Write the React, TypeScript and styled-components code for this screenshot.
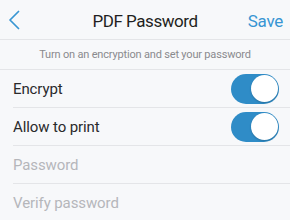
import React from "react";
import styled, { createGlobalStyle } from "styled-components";

const Global = createGlobalStyle`
  html, body { margin: 0; padding: 0; background: #f7f8fa; }
  body { font-family: Roboto, "Liberation Sans", sans-serif; -webkit-font-smoothing: antialiased; }
`;

const Screen = styled.div`
  width: 290px;
  height: 220px;
  background: #f7f8fa;
  overflow: hidden;
  display: flex;
  flex-direction: column;
`;

const NavBar = styled.div`
  height: 39px;
  border-bottom: 1px solid #e4e5e8;
  display: grid;
  grid-template-columns: 60px 1fr 60px;
  align-items: center;
  flex-shrink: 0;
`;

const BackButton = styled.button`
  border: 0;
  background: none;
  padding: 0 0 0 9px;
  height: 100%;
  display: flex;
  align-items: center;
  justify-self: start;
  cursor: pointer;
`;

const Title = styled.div`
  text-align: center;
  font-size: 17px;
  letter-spacing: -0.45px;
  padding-top: 2px;
  color: #1f1f21;
  font-weight: 400;
`;

const SaveButton = styled.button`
  border: 0;
  background: none;
  justify-self: end;
  padding: 2px 7px 0 0;
  font-family: inherit;
  font-size: 17px;
  letter-spacing: -0.3px;
  color: #3895d3;
  cursor: pointer;
`;

const Hint = styled.div`
  height: 29px;
  border-bottom: 1px solid #e4e5e8;
  display: flex;
  align-items: center;
  justify-content: center;
  font-size: 11px;
  letter-spacing: -0.18px;
  color: #8a8a8e;
  flex-shrink: 0;
`;

const List = styled.div`
  display: flex;
  flex-direction: column;
  padding-left: 13px;
`;

const Row = styled.div<{ $last?: boolean }>`
  height: 37px;
  flex-shrink: 0;
  display: flex;
  align-items: center;
  justify-content: space-between;
  padding-right: 11px;
  border-bottom: ${(p) => (p.$last ? "none" : "1px solid #e4e5e8")};
`;

const Label = styled.span<{ $placeholder?: boolean }>`
  font-size: 15px;
  letter-spacing: -0.1px;
  color: ${(p) => (p.$placeholder ? "#b5b6ba" : "#2a2a2c")};
`;

const Toggle = styled.div<{ $on: boolean }>`
  width: 48px;
  height: 30px;
  border-radius: 15px;
  background: ${(p) => (p.$on ? "#2f8cc7" : "#e5e5ea")};
  position: relative;
  box-sizing: border-box;
`;

const Knob = styled.div<{ $on: boolean }>`
  position: absolute;
  top: 1.5px;
  left: ${(p) => (p.$on ? "19.5px" : "1.5px")};
  width: 27px;
  height: 27px;
  border-radius: 50%;
  background: #fff;
  box-shadow: 0 1px 2px rgba(0, 0, 0, 0.2);
`;

const Switch = ({ on }: { on: boolean }) => (
  <Toggle $on={on}>
    <Knob $on={on} />
  </Toggle>
);

export default function App() {
  return (
    <>
      <Global />
      <Screen>
        <NavBar>
          <BackButton aria-label="Back">
            <svg width="12" height="20" viewBox="0 0 12 20">
              <path d="M9.5 1.5 L1 10 L9.5 18.5" fill="none" stroke="#3895d3" strokeWidth="1.7" strokeLinecap="round" strokeLinejoin="round" />
            </svg>
          </BackButton>
          <Title>PDF Password</Title>
          <SaveButton>Save</SaveButton>
        </NavBar>
        <Hint>Turn on an encryption and set your password</Hint>
        <List>
          <Row>
            <Label>Encrypt</Label>
            <Switch on />
          </Row>
          <Row>
            <Label>Allow to print</Label>
            <Switch on />
          </Row>
          <Row>
            <Label $placeholder>Password</Label>
          </Row>
          <Row $last>
            <Label $placeholder>Verify password</Label>
          </Row>
        </List>
      </Screen>
    </>
  );
}
